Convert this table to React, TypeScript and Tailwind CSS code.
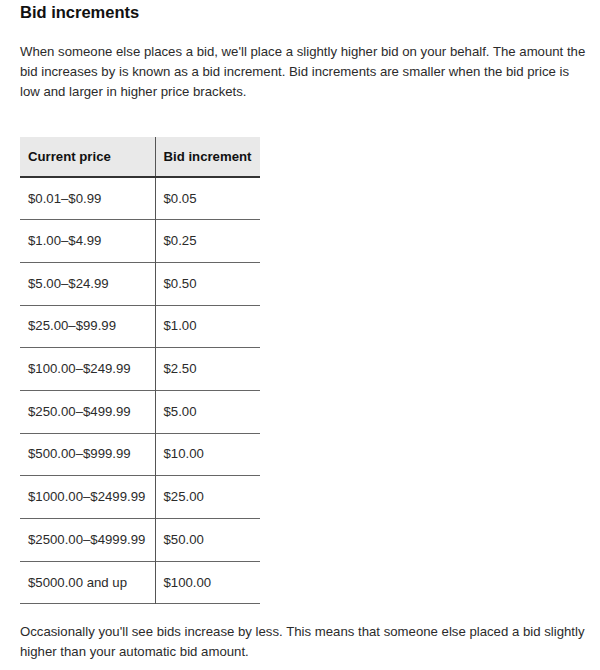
const rows: [string, string][] = [
  ['$0.01–$0.99', '$0.05'],
  ['$1.00–$4.99', '$0.25'],
  ['$5.00–$24.99', '$0.50'],
  ['$25.00–$99.99', '$1.00'],
  ['$100.00–$249.99', '$2.50'],
  ['$250.00–$499.99', '$5.00'],
  ['$500.00–$999.99', '$10.00'],
  ['$1000.00–$2499.99', '$25.00'],
  ['$2500.00–$4999.99', '$50.00'],
  ['$5000.00 and up', '$100.00'],
];

export default function App() {
  return (
    <div className="min-h-screen bg-white pl-5 pr-2 text-[#2b2b2b] font-['Liberation_Sans',Arial,sans-serif]">
      <h2 className="pt-[1px] text-[16.5px] leading-[22px] font-bold text-[#111]">Bid increments</h2>
      <p className="mt-[19px] text-[13.2px] leading-[20px]">
        When someone else places a bid, we'll place a slightly higher bid on your behalf. The amount the bid
        increases by is known as a bid increment. Bid increments are smaller when the bid price is low and
        larger in higher price brackets.
      </p>
      <table className="mt-[35px] border-collapse text-[13.2px] leading-[20px]">
        <thead>
          <tr className="bg-[#e9e9e9] border-b-2 border-[#333]">
            <th className="w-[135px] h-[40px] px-2 text-left font-bold text-[#111] border-r border-[#555] whitespace-nowrap">
              Current price
            </th>
            <th className="w-[105px] h-[40px] px-2 text-left font-bold text-[#111] whitespace-nowrap">
              Bid increment
            </th>
          </tr>
        </thead>
        <tbody>
          {rows.map(([price, inc]) => (
            <tr key={price} className="border-b border-[#666]">
              <td className="h-[42.7px] px-2 border-r border-[#555] whitespace-nowrap">{price}</td>
              <td className="h-[42.7px] px-2 whitespace-nowrap">{inc}</td>
            </tr>
          ))}
        </tbody>
      </table>
      <p className="mt-[18px] text-[13.2px] leading-[20px]">
        Occasionally you'll see bids increase by less. This means that someone else placed a bid slightly
        higher than your automatic bid amount.
      </p>
    </div>
  );
}
